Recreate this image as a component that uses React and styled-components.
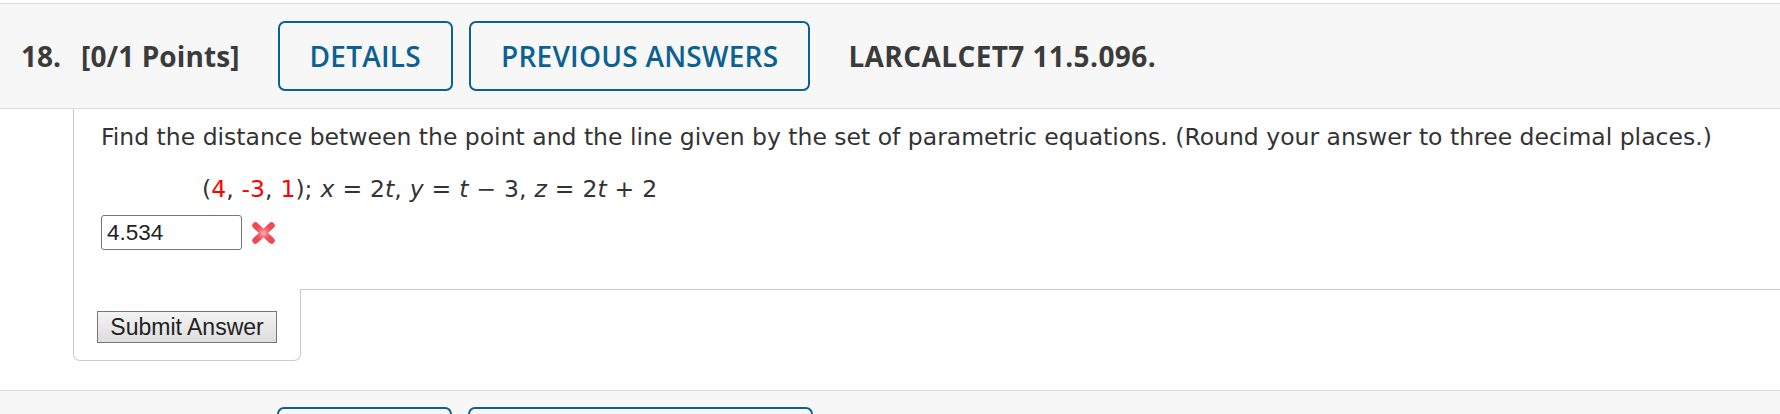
import React from "react";
import styled, { createGlobalStyle } from "styled-components";

const Global = createGlobalStyle`
  html, body { margin: 0; padding: 0; background: #fff; }
  body { width: 1780px; height: 414px; overflow: hidden; }
`;

const Page = styled.div`
  padding-top: 3px;
  display: flex;
  flex-direction: column;
`;

const Header = styled.div`
  display: flex;
  align-items: center;
  background: #f7f7f7;
  border-top: 1px solid #dcdcdc;
  border-bottom: 1px solid #dcdcdc;
  height: 104px;
  padding: 0 0 0 21px;
  box-sizing: content-box;
  font-family: "Open Sans", "Noto Sans", sans-serif;
  color: #3b3b3b;
`;

const PeekHeader = styled(Header)`
  align-items: flex-start;
  border-bottom: none;
  height: 40px;
  padding: 16px 0 0 277px;
`;

const Number = styled.span`
  font-size: 28px;
  font-weight: 700;
  margin-right: 20px;
`;

const Points = styled.span`
  font-size: 28px;
  font-weight: 700;
  margin-right: 38px;
  letter-spacing: 0.1px;
`;

const HeadButton = styled.button`
  font-family: "Open Sans", "Noto Sans", sans-serif;
  font-size: 28px;
  font-weight: 600;
  color: #0b6194;
  background: transparent;
  border: 2.5px solid #0b6194;
  border-radius: 7px;
  height: 70px;
  ${(p) => (p.$w ? `width: ${p.$w}px;` : "")}
  padding: 0 30px;
  margin-right: ${(p) => p.$gap}px;
  letter-spacing: 0.25px;
  box-sizing: border-box;
  flex: none;
`;

const Ref = styled.span`
  font-size: 28px;
  font-weight: 700;
  letter-spacing: 0.4px;
`;

const Card = styled.div`
  margin-left: 73px;
  display: flex;
  flex-direction: column;
  font-family: "DejaVu Sans", Verdana, sans-serif;
  color: #333;
`;

const Body = styled.div`
  border-left: 1px solid #cccccc;
  padding: 13px 0 39px 27px;
  display: flex;
  flex-direction: column;
`;

const Prompt = styled.div`
  font-size: 23.5px;
  line-height: 30px;
  white-space: nowrap;
`;

const Equation = styled.div`
  font-size: 23.5px;
  line-height: 30px;
  margin: 22px 0 0 101px;
  white-space: nowrap;
  word-spacing: 0.5px;
`;

const Red = styled.span`
  color: #ff0000;
`;

const Var = styled.i`
  font-style: italic;
`;

const AnswerRow = styled.div`
  display: flex;
  align-items: center;
  margin-top: 11px;
  gap: 9px;
`;

const AnswerInput = styled.input`
  width: 141px;
  height: 35px;
  box-sizing: border-box;
  border: 1px solid #767676;
  border-radius: 3px;
  padding: 0 5px;
  font-family: "Liberation Sans", Arial, sans-serif;
  font-size: 22.5px;
  color: #222;
  background: #fff;
`;

const BottomRow = styled.div`
  display: flex;
`;

const SubmitCell = styled.div`
  width: 228px;
  border-left: 1px solid #cccccc;
  border-right: 1px solid #cccccc;
  border-bottom: 1px solid #cccccc;
  border-radius: 0 0 7px 7px;
  padding: 22px 0 17px 23px;
  flex: none;
  box-sizing: border-box;
`;

const Filler = styled.div`
  flex: 1;
  border-top: 1px solid #cccccc;
`;

const SubmitButton = styled.button`
  font-family: "Liberation Sans", Arial, sans-serif;
  font-size: 23px;
  color: #222;
  width: 180px;
  height: 32px;
  padding: 0;
  border: 1px solid #777;
  border-radius: 0;
  background: linear-gradient(#f4f4f4, #dddddd);
`;

const Spacer = styled.div`
  height: 29px;
`;

function WrongIcon() {
  return (
    <svg width="25" height="24" viewBox="0 0 25 24">
      <defs>
        <radialGradient id="xg" cx="50%" cy="50%" r="50%">
          <stop offset="0%" stopColor="#f79aa0" />
          <stop offset="100%" stopColor="#ee4a55" />
        </radialGradient>
      </defs>
      <g stroke="url(#xg)" strokeWidth="6.5" strokeLinecap="round">
        <line x1="4.5" y1="4.5" x2="20.5" y2="19.5" />
        <line x1="20.5" y1="4.5" x2="4.5" y2="19.5" />
      </g>
      <circle cx="12.5" cy="12" r="2.5" fill="#f6a0a5" opacity="0.8" />
    </svg>
  );
}

export default function App() {
  return (
    <>
      <Global />
      <Page>
        <Header>
          <Number>18.</Number>
          <Points>[0/1 Points]</Points>
          <HeadButton $gap={16}>DETAILS</HeadButton>
          <HeadButton $gap={38}>PREVIOUS ANSWERS</HeadButton>
          <Ref>LARCALCET7 11.5.096.</Ref>
        </Header>
        <Card>
          <Body>
            <Prompt>
              Find the distance between the point and the line given by the set of parametric equations. (Round your answer to three decimal places.)
            </Prompt>
            <Equation>
              (<Red>4</Red>, <Red>-3</Red>, <Red>1</Red>); <Var>x</Var> = 2<Var>t</Var>, <Var>y</Var> = <Var>t</Var> − 3, <Var>z</Var> = 2<Var>t</Var> + 2
            </Equation>
            <AnswerRow>
              <AnswerInput defaultValue="4.534" />
              <WrongIcon />
            </AnswerRow>
          </Body>
          <BottomRow>
            <SubmitCell>
              <SubmitButton>Submit Answer</SubmitButton>
            </SubmitCell>
            <Filler />
          </BottomRow>
        </Card>
        <Spacer />
        <PeekHeader>
          <HeadButton $gap={16} $w={175} aria-label="DETAILS" />
          <HeadButton $gap={38} $w={345} aria-label="PREVIOUS ANSWERS" />
        </PeekHeader>
      </Page>
    </>
  );
}
